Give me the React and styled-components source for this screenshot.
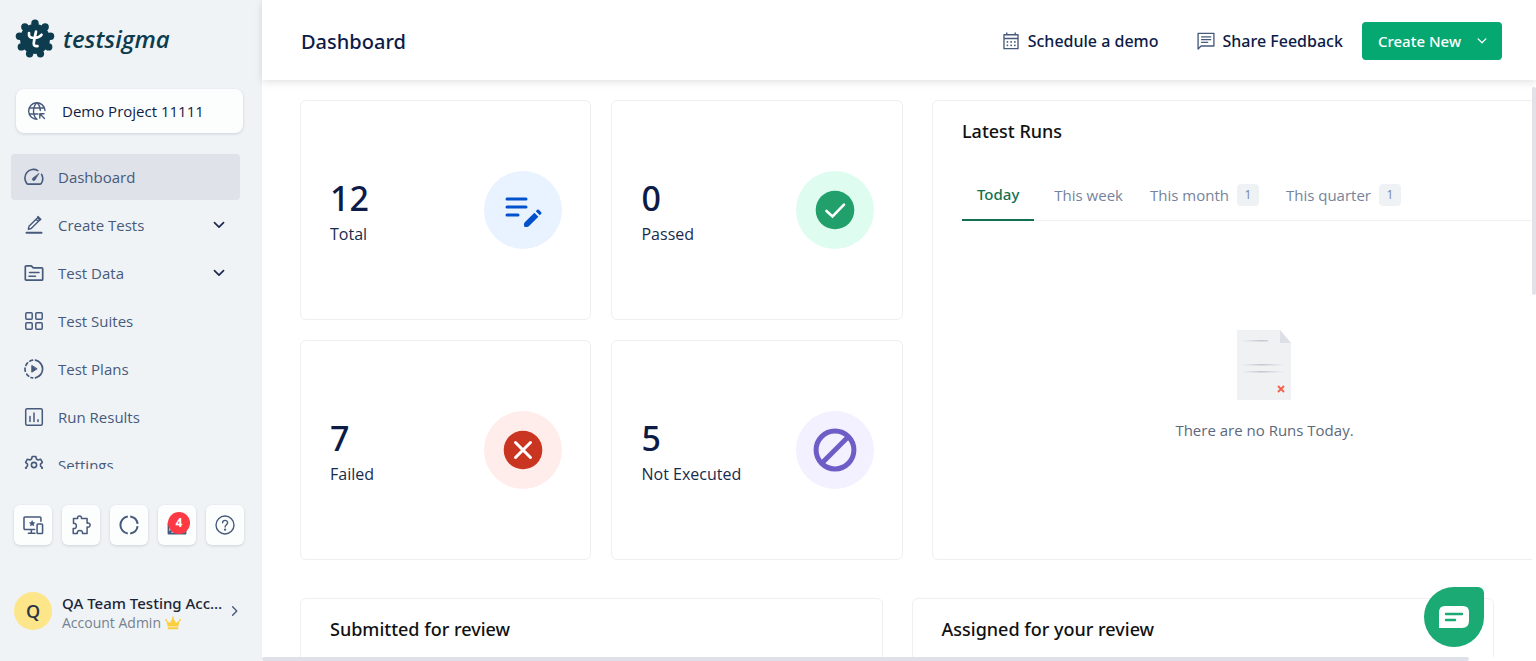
import * as React from 'react';
import styled, {createGlobalStyle} from 'styled-components';

const App = () => {
  return (
    <Layout>
      <GlobalStyle />
      <Sidebar>
        <Logo href='#'>
          <LogoMark />
          testsigma
        </Logo>
        <ProjectButton type='button'>
          <GlobeIcon />
          Demo Project 11111
        </ProjectButton>
        <Nav>
          {navItems.map((item) => (
            <NavLink key={item.label} href='#' $active={item.active}>
              {item.icon}
              <NavLabel>{item.label}</NavLabel>
              {item.expandable && <Chevron size={14} color='#1b2a4e' width={1.7} />}
            </NavLink>
          ))}
        </Nav>
        <Tools>
          {tools.map((tool) => (
            <ToolButton key={tool.label} type='button' aria-label={tool.label}>
              {tool.icon}
              {tool.count != null && <ToolBadge>{tool.count}</ToolBadge>}
            </ToolButton>
          ))}
        </Tools>
        <Profile type='button'>
          <Avatar>Q</Avatar>
          <ProfileText>
            <ProfileName>QA Team Testing Account</ProfileName>
            <ProfileRole>
              Account Admin
              <CrownIcon />
            </ProfileRole>
          </ProfileText>
          <ChevronRight />
        </Profile>
      </Sidebar>

      <Workspace>
        <Header>
          <Title>Dashboard</Title>
          <HeaderLink href='#'>
            <CalendarIcon />
            Schedule a demo
          </HeaderLink>
          <HeaderLink href='#'>
            <MessageIcon />
            Share Feedback
          </HeaderLink>
          <CreateButton type='button'>
            Create New
            <Chevron size={12} color='#ffffff' width={1.3} />
          </CreateButton>
        </Header>
        <ScrollFrame>
          <Content>
            <Overview>
              <Stats>
                {stats.map((stat) => (
                  <StatCard key={stat.label}>
                    <div>
                      <StatValue>{stat.value}</StatValue>
                      <StatLabel>{stat.label}</StatLabel>
                    </div>
                    <StatIcon $tint={stat.tint}>{stat.icon}</StatIcon>
                  </StatCard>
                ))}
              </Stats>
              <Runs>
                <CardTitle>Latest Runs</CardTitle>
                <Tabs role='tablist'>
                  {tabs.map((tab, index) => (
                    <Tab
                      key={tab.label}
                      type='button'
                      role='tab'
                      aria-selected={index === 0}
                      $active={index === 0}>
                      {tab.label}
                      {tab.count != null && <TabCount>{tab.count}</TabCount>}
                    </Tab>
                  ))}
                </Tabs>
                <Empty>
                  <DocumentIcon />
                  There are no Runs Today.
                </Empty>
              </Runs>
            </Overview>
            <Reviews>
              <ReviewCard>
                <CardTitle>Submitted for review</CardTitle>
              </ReviewCard>
              <ReviewCard>
                <CardTitle>Assigned for your review</CardTitle>
              </ReviewCard>
            </Reviews>
          </Content>
          <VerticalThumb />
          <HorizontalThumb />
        </ScrollFrame>
      </Workspace>
      <ChatButton type='button' aria-label='Open chat'>
        <ChatIcon />
      </ChatButton>
    </Layout>
  );
};

/* Icons */

const Icon = ({size = 20, color = '#475a7c', width = 1.4, children, ...rest}) => (
  <svg
    width={size}
    height={size}
    viewBox='0 0 20 20'
    fill='none'
    stroke={color}
    strokeWidth={width}
    strokeLinecap='round'
    strokeLinejoin='round'
    aria-hidden='true'
    {...rest}>
    {children}
  </svg>
);

const teeth = Array.from({length: 9}, (_, i) => (i * 2 * Math.PI) / 9);

const LogoMark = () => (
  <svg width='40' height='40' viewBox='0 0 40 40' aria-hidden='true'>
    <g fill='#0d3c4e'>
      <circle cx='20' cy='20' r='15' />
      {teeth.map((angle) => (
        <circle
          key={angle}
          cx={20 + 15.8 * Math.sin(angle)}
          cy={20 - 15.8 * Math.cos(angle)}
          r='3.7'
        />
      ))}
    </g>
    <path
      d='M21 12.500 18.800 23.500q-.6 4.200 3.700 3.600M14 14.200q-.8 5 5.500 4.800 4.500-.3 7-3.200'
      fill='none'
      stroke='#ffffff'
      strokeWidth='2.7'
      strokeLinecap='round'
    />
  </svg>
);

const GlobeIcon = () => (
  <Icon width={1.4}>
    <path d='M18 9.500A8.200 8.200 0 1 0 10 18.200M2.600 7h14.600M2.600 13H11M9.800 1.800C5.500 6 5.500 14 9.500 18M10.200 1.800C12.500 4 13.300 6.500 13.300 9.500' />
    <path d='M12.800 17v-4.200H17M13 13l4.500 4.500' />
  </Icon>
);

const GaugeIcon = () => (
  <Icon width={1.6}>
    <path d='M13.800 3.600A8.600 8.600 0 0 0 2.600 16.200q.6.900 1.700.9h11.400q1.100 0 1.700-.9A8.600 8.600 0 0 0 17.600 7.400' />
    <path d='M14.800 6.500 8.900 11a1.500 1.500 0 1 0 2.100 2.100z' fill='#475a7c' strokeWidth='.6' />
  </Icon>
);

const PencilIcon = () => (
  <Icon>
    <path d='M4.300 14.200 5 11.300 13.600 2.700l2.200 2.200-8.600 8.600zM12 4.300l2.200 2.200' />
    <path d='M14 1.900 16.500 4.400' strokeWidth='2' />
    <path d='M2.500 17.800h15' strokeWidth='2' />
  </Icon>
);

const FolderIcon = () => (
  <Icon width={1.7}>
    <path d='M1.300 3.800q0-1 1-1h5l2 2h8.400q1 0 1 1v10.400q0 1-1 1H2.300q-1 0-1-1z' />
    <path d='M5.500 9.500h9.500M5 13.200h6.500' strokeWidth='1.5' />
  </Icon>
);

const GridIcon = () => (
  <Icon width={1.5}>
    <rect x='1.8' y='1.8' width='6.4' height='6.4' rx='1' />
    <rect x='11.8' y='1.8' width='6.4' height='6.4' rx='1' />
    <rect x='1.8' y='11.8' width='6.4' height='6.4' rx='1' />
    <rect x='11.8' y='11.8' width='6.4' height='6.4' rx='1' />
  </Icon>
);

const PlayIcon = () => (
  <Icon width={1.7}>
    <path d='M11.500 1.200a9 9 0 0 1 0 17.600' />
    <path d='M8.500 1.200a9 9 0 0 0-2.700 1M3.600 3.800a9 9 0 0 0-1.700 2.600M1 9.200a9 9 0 0 0 .3 3M2.800 15.200a9 9 0 0 0 1.900 2M7 18.500a9 9 0 0 0 1.600.3' />
    <path d='M7.800 6.800v6.400l5-3.200z' fill='#475a7c' strokeWidth='1' />
  </Icon>
);

const ChartIcon = () => (
  <Icon width={1.5}>
    <rect x='1.7' y='1.7' width='16.6' height='16.6' rx='1.5' />
    <path d='M6 9.500v5M10 6v8.500M14 12.800v1.700' />
  </Icon>
);

const GearIcon = () => (
  <Icon width={1.6}>
    <path d='M8.200 1.500h3.600l.6 2.500 1.700 1 2.500-.8 1.800 3.100-1.900 1.800v1.900l1.900 1.800-1.800 3.100-2.500-.8-1.700 1-.6 2.500H8.200l-.6-2.500-1.700-1-2.500.8-1.800-3.100L3.500 11V9.100L1.600 7.300l1.800-3.100 2.500.8 1.700-1z' />
    <circle cx='10' cy='10' r='2.6' />
  </Icon>
);

const Chevron = ({size, color, width}) => (
  <Icon size={size} color={color} width={(width * 20) / size}>
    <path d='M3.500 6.500l6.500 6.500 6.500-6.500' />
  </Icon>
);

const ChevronRight = () => (
  <Icon size={12} color='#475a7c' width={2.3}>
    <path d='M6 3l7 7-7 7' />
  </Icon>
);

const DevicesIcon = () => (
  <Icon size={22} width={1.4}>
    <path d='M11.500 14H2.800q-1 0-1-1V3.700q0-1 1-1h13.400q1 0 1 1v2.800M8.500 14v3M5.800 17.500h6' />
    <rect x='13.7' y='9' width='5' height='8.8' rx='.8' />
    <path d='M9.200 5.500l1 2 2 .3-1.500 1.400.4 2-1.900-1-1.900 1 .4-2-1.500-1.400 2-.3z' fill='#475a7c' stroke='none' />
  </Icon>
);

const PuzzleIcon = () => (
  <Icon width={1.5}>
    <path d='M2.500 3.500h4.200C6.300 2 7 .9 8.500.9s2.300 1.100 1.900 2.600h5.700v4.700c1.600-.5 3.100.4 3.100 1.900s-1.500 2.400-3.100 1.900v6.500h-4.600c.3-2-.8-3.100-2.600-3.100s-2.900 1.100-2.500 3.100H2.200v-5c2 .4 3.200-.7 3.200-2.500S4.200 8.100 2.500 8.400z' />
  </Icon>
);

const RingIcon = () => (
  <Icon width={2}>
    <path
      d='M8.800 1.400a8.700 8.700 0 0 0 0 17.200M11.200 1.400a8.700 8.700 0 0 1 7.400 7.400M18.600 11.200a8.700 8.700 0 0 1-7.400 7.400'
      strokeLinecap='butt'
    />
  </Icon>
);

const InboxIcon = () => (
  <Icon width={1.8} color='#475a7c'>
    <path d='M1.500 8v10.500h17V9M1.500 18.500 5 15' />
  </Icon>
);

const HelpIcon = () => (
  <Icon width={1.4}>
    <circle cx='10' cy='10' r='9' />
    <path d='M7.600 7.800c0-3.300 5-3.300 5 0 0 1.800-2.500 2-2.500 4.200' />
    <circle cx='10.1' cy='14.6' r='.5' fill='#475a7c' />
  </Icon>
);

const CrownIcon = () => (
  <svg width='16' height='14' viewBox='0 0 16 14' fill='#fbcf3b' aria-hidden='true'>
    <path d='M2.800 10.600 1 4.300l4 2.700L8 1.300l3 5.700 4-2.700-1.800 6.300zM2.800 11.200h10.400v2H2.800z' />
    <circle cx='1' cy='4' r='1' />
    <circle cx='8' cy='1.4' r='1' />
    <circle cx='15' cy='4' r='1' />
  </svg>
);

const CalendarIcon = () => (
  <Icon size={18} width={1.5}>
    <path d='M2.200 3h15.600v15.500H2.200zM2.200 7.200h15.600M5.300 1v2M14.700 1v2' />
    <path d='M6 11h8.500M6 14.800h8.500' strokeWidth='1.9' strokeDasharray='.1 4' />
  </Icon>
);

const MessageIcon = () => (
  <Icon size={18} width={1.5}>
    <path d='M1.200 1.500h17.600v14H4.500l-3.300 3.300z' />
    <path d='M5 5.500h10.300M5 8.500h10.300M5 11.500h7' strokeWidth='1.3' />
  </Icon>
);

const EditListIcon = () => (
  <svg width='40' height='40' viewBox='0 0 40 40' aria-hidden='true'>
    <path d='M4 9h19M4 17h19M4 25h11' stroke='#0052cc' strokeWidth='3' strokeLinecap='round' />
    <path
      d='M21 34.300q0-1.200.8-2l9.600-9.600 4 4-9.600 9.600q-.8.800-2 .8h-1.300q-1.500 0-1.500-1.500zM32.800 21.200l4 4 1.400-1.400q.8-.8 0-1.600l-2.400-2.400q-.8-.8-1.600 0z'
      fill='#0052cc'
    />
  </svg>
);

const PassedIcon = () => (
  <svg width='40' height='40' viewBox='0 0 40 40' fill='none' aria-hidden='true'>
    <circle cx='20' cy='20' r='19.3' fill='#22a06b' />
    <path d='M11.500 21l6 5.500L29 14.700' stroke='#ffffff' strokeWidth='2.6' strokeLinecap='round' />
  </svg>
);

const FailedIcon = () => (
  <svg width='40' height='40' viewBox='0 0 40 40' fill='none' aria-hidden='true'>
    <circle cx='20' cy='20' r='19.3' fill='#ca3521' />
    <path d='M12.500 12.500l15 15M27.500 12.500l-15 15' stroke='#ffffff' strokeWidth='3' strokeLinecap='round' />
  </svg>
);

const BlockedIcon = () => (
  <svg width='44' height='44' viewBox='0 0 44 44' fill='none' stroke='#6e5dc6' aria-hidden='true'>
    <circle cx='22' cy='22' r='18.9' strokeWidth='5' />
    <path d='M9 35L35 9' strokeWidth='5' />
  </svg>
);

const DocumentIcon = () => (
  <svg width='54' height='70' viewBox='0 0 54 70' fill='none' aria-hidden='true'>
    <defs>
      <linearGradient id='rule'>
        <stop offset='0' stopColor='#c3c6d1' stopOpacity='0' />
        <stop offset='.45' stopColor='#c3c6d1' />
        <stop offset='1' stopColor='#c3c6d1' stopOpacity='0' />
      </linearGradient>
    </defs>
    <path d='M0 0h43l11 13v57H0z' fill='#f0f1f3' />
    <path d='M43 0v13h11z' fill='#dcdfe5' />
    <path d='M5 10h26v1.500H5zM5 34h43v1.500H5zM5 41h43v1.500H5z' fill='url(#rule)' />
    <path d='M41 56l6 6M47 56l-6 6' stroke='#f0604a' strokeWidth='1.8' />
  </svg>
);

const ChatIcon = () => (
  <svg width='32' height='24' viewBox='0 0 32 24' fill='none' aria-hidden='true'>
    <path d='M7 1h18q6 0 6 6v9q0 7-7 7H1V7q0-6 6-6z' fill='#ffffff' />
    <path d='M8 9h16M8 15h9' stroke='#1ba974' strokeWidth='2.4' strokeLinecap='round' />
  </svg>
);

/* Data */

const navItems = [
  {label: 'Dashboard', icon: <GaugeIcon />, active: true},
  {label: 'Create Tests', icon: <PencilIcon />, expandable: true},
  {label: 'Test Data', icon: <FolderIcon />, expandable: true},
  {label: 'Test Suites', icon: <GridIcon />},
  {label: 'Test Plans', icon: <PlayIcon />},
  {label: 'Run Results', icon: <ChartIcon />},
  {label: 'Settings', icon: <GearIcon />},
];

const tools = [
  {label: 'Devices', icon: <DevicesIcon />},
  {label: 'Add-ons', icon: <PuzzleIcon />},
  {label: 'Usage', icon: <RingIcon />},
  {label: 'Notifications', icon: <InboxIcon />, count: 4},
  {label: 'Help', icon: <HelpIcon />},
];

const stats = [
  {label: 'Total', value: 12, tint: '#e9f2ff', icon: <EditListIcon />},
  {label: 'Passed', value: 0, tint: '#dffcf0', icon: <PassedIcon />},
  {label: 'Failed', value: 7, tint: '#ffedeb', icon: <FailedIcon />},
  {label: 'Not Executed', value: 5, tint: '#f3f0ff', icon: <BlockedIcon />},
];

const tabs = [
  {label: 'Today'},
  {label: 'This week'},
  {label: 'This month', count: 1},
  {label: 'This quarter', count: 1},
];

/* Styles */

const GlobalStyle = createGlobalStyle`
  * {
    box-sizing: border-box;
  }

  body {
    margin: 0;
    background-color: #ffffff;
    color: #172b4d;
    font-family: 'Open Sans', 'Noto Sans', sans-serif;
    font-size: 15px;
  }

  button {
    border: 0;
    padding: 0;
    background: none;
    color: inherit;
    font: inherit;
    cursor: pointer;
  }

  a {
    color: inherit;
    text-decoration: none;
  }

  svg {
    flex-shrink: 0;
  }
`;

const mediumFont = `
  font-family: 'Noto Sans', 'Open Sans', sans-serif;
  font-weight: 500;
`;

const Layout = styled.div`
  display: grid;
  grid-template-columns: 262px minmax(0, 1fr);
  height: 100vh;
  overflow: hidden;
`;

const Sidebar = styled.aside`
  display: flex;
  flex-direction: column;
  min-height: 0;
  padding: 19px 16px 28px 14px;
  background-color: #eff3f6;
`;

const Logo = styled.a`
  display: flex;
  align-items: center;
  gap: 8px;
  height: 40px;
  padding-left: 1px;
  color: #0d3c4e;
  font-size: 24px;
  font-style: italic;
  font-weight: 600;
  line-height: 36px;
`;

const ProjectButton = styled.button`
  display: flex;
  flex-shrink: 0;
  align-items: center;
  gap: 15px;
  height: 44px;
  margin: 30px 3px 21px 2px;
  padding: 0 11px;
  border-radius: 8px;
  background-color: #fcfefe;
  box-shadow: 0 1px 3px rgba(23, 43, 77, 0.16);
  color: #111c44;
`;

const Nav = styled.nav`
  display: flex;
  flex: 1;
  flex-direction: column;
  gap: 2px;
  min-height: 0;
  margin: 0 6px 0 -3px;
  overflow: hidden;
`;

const NavLink = styled.a`
  display: flex;
  flex-shrink: 0;
  align-items: center;
  gap: 14px;
  height: 46px;
  padding: 0 14px 0 13px;
  border-radius: 4px;
  background-color: ${(props) => (props.$active ? '#dfe2e8' : 'transparent')};
  color: #475a7c;
`;

const NavLabel = styled.span`
  flex: 1;
`;

const Tools = styled.div`
  display: flex;
  gap: 10px;
  margin-top: 36px;
`;

const ToolButton = styled.button`
  position: relative;
  display: grid;
  flex: 0 0 38px;
  place-items: center;
  height: 40px;
  border-radius: 6px;
  background-color: #fcfefe;
  box-shadow: 0 1px 3px rgba(23, 43, 77, 0.16);
`;

const ToolBadge = styled.span`
  position: absolute;
  top: 7px;
  right: 6px;
  width: 22px;
  border-radius: 11px;
  background-color: #fd3943;
  color: #ffffff;
  font-size: 12px;
  font-weight: 700;
  line-height: 22px;
  text-align: center;
`;

const Profile = styled.button`
  display: flex;
  align-items: center;
  margin-top: 44px;
  text-align: left;
`;

const Avatar = styled.span`
  flex: 0 0 38px;
  margin-right: 10px;
  border-radius: 50%;
  background-color: #fde68a;
  color: #2a3547;
  font-size: 18px;
  font-weight: 600;
  line-height: 38px;
  text-align: center;
`;

const ProfileText = styled.span`
  flex: 0 0 163px;
  min-width: 0;
  margin-right: 4px;
  padding-top: 4px;
`;

const ProfileName = styled.span`
  display: block;
  overflow: hidden;
  color: #1c2536;
  ${mediumFont}
  line-height: 20px;
  text-overflow: ellipsis;
  white-space: nowrap;
`;

const ProfileRole = styled.span`
  display: flex;
  align-items: center;
  gap: 4px;
  color: #76808f;
  font-size: 14px;
  line-height: 20px;
`;

const Workspace = styled.div`
  display: flex;
  flex-direction: column;
  min-width: 0;
  min-height: 0;
`;

const Header = styled.header`
  z-index: 1;
  display: flex;
  flex-shrink: 0;
  align-items: center;
  height: 80px;
  padding: 2px 34px 0 39px;
  background-color: #ffffff;
  box-shadow: 0 2px 8px rgba(0, 0, 0, 0.12);
`;

const Title = styled.h1`
  flex: 1;
  margin: 0;
  color: #0d1b47;
  ${mediumFont}
  font-size: 20px;
`;

const HeaderLink = styled.a`
  display: flex;
  align-items: center;
  gap: 8px;
  margin-left: 38px;
  color: #0d1b47;
  ${mediumFont}
  font-size: 16px;
`;

const CreateButton = styled.button`
  display: flex;
  align-items: center;
  gap: 15px;
  height: 38px;
  margin-left: 19px;
  padding: 0 14px 0 16px;
  border-radius: 4px;
  background-color: #05a871;
  color: #ffffff;
  ${mediumFont}
`;

const ScrollFrame = styled.main`
  display: grid;
  flex: 1;
  grid-template-columns: minmax(0, 1fr) 4px;
  grid-template-rows: minmax(0, 1fr) 4px;
  min-height: 0;
`;

const Content = styled.div`
  padding: 20px 38px 0 38px;
  overflow: hidden;
`;

const VerticalThumb = styled.div`
  height: 36%;
  margin-top: 7px;
  border-radius: 2px;
  background-color: #e1e3e9;
`;

const HorizontalThumb = styled.div`
  width: 95%;
  border-radius: 2px;
  background-color: #dfe1e8;
`;

const Overview = styled.div`
  display: flex;
  gap: 29px;
  height: 460px;
`;

const Stats = styled.div`
  display: grid;
  flex: 0 0 50.5%;
  grid-template-columns: 1fr 1fr;
  grid-template-rows: 1fr 1fr;
  gap: 20px;
`;

const Card = styled.section`
  border: 1px solid #eeeff1;
  border-radius: 6px;
`;

const StatCard = styled(Card)`
  display: flex;
  align-items: center;
  justify-content: space-between;
  padding: 0 28px 0 29px;
`;

const StatValue = styled.div`
  color: #0d1b47;
  ${mediumFont}
  font-size: 34px;
  line-height: 48px;
`;

const StatLabel = styled.div`
  color: #172b4d;
  font-size: 16px;
  line-height: 24px;
`;

const StatIcon = styled.div`
  display: grid;
  place-items: center;
  width: 78px;
  height: 78px;
  border-radius: 50%;
  background-color: ${(props) => props.$tint};
`;

const Runs = styled(Card)`
  display: flex;
  flex: 0 0 55.7%;
  flex-direction: column;
  padding: 17px 29px 0;
`;

const CardTitle = styled.h2`
  margin: 0;
  color: #111111;
  ${mediumFont}
  font-size: 18px;
  line-height: 26px;
`;

const Tabs = styled.div`
  display: flex;
  height: 52px;
  margin-top: 25px;
  border-bottom: 1px solid #f0f1f3;
`;

const Tab = styled.button`
  display: flex;
  align-items: center;
  gap: 8px;
  height: 52px;
  padding: 2px 13px 0 14px;
  border-bottom: 2px solid transparent;
  color: #76839a;

  ${(props) =>
    props.$active &&
    `
    margin-right: 6px;
    padding: 0 15px;
    border-bottom-color: #12704f;
    color: #12704f;
    ${mediumFont}
  `}
`;

const TabCount = styled.span`
  width: 22px;
  border-radius: 4px;
  background-color: #eff2f5;
  font-size: 12px;
  line-height: 22px;
`;

const Empty = styled.div`
  display: flex;
  flex: 1;
  flex-direction: column;
  align-items: center;
  justify-content: center;
  gap: 20px;
  padding-bottom: 10px;
  color: #5d697b;
`;

const Reviews = styled.div`
  display: grid;
  grid-template-columns: 1fr 1fr;
  gap: 29px;
  margin-top: 38px;
`;

const ReviewCard = styled(Card)`
  height: 220px;
  padding: 17px 29px;
`;

const ChatButton = styled.button`
  position: fixed;
  right: 52px;
  bottom: 14px;
  z-index: 2;
  display: grid;
  place-items: center;
  width: 60px;
  height: 60px;
  border-radius: 30px 6px 30px 30px;
  background-color: #1ba974;
`;

export default App;
